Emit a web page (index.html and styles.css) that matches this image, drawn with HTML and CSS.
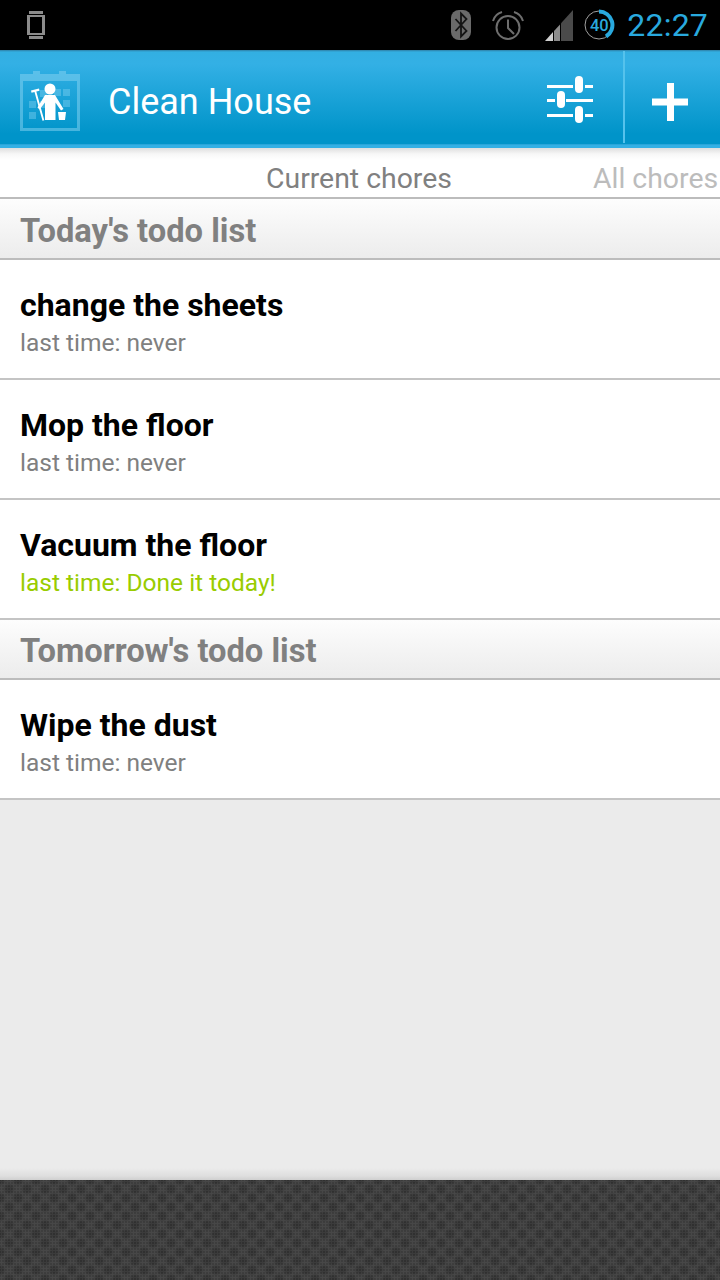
FILE: index.html
```
<!DOCTYPE html>
<html lang="en">
<head>
<meta charset="utf-8">
<title>Clean House</title>
<link rel="stylesheet" href="styles.css">
</head>
<body>
<div class="app">
  <div class="status">
    <svg class="st-phone" width="18" height="28" viewBox="0 0 18 28">
      <path fill="#8c8c8c" d="M2 0h14v3H2zM2 25h14v3H2z"/>
      <path fill="#8c8c8c" fill-rule="evenodd" d="M0 4h18v20H0zM3 6v16h12V6z"/>
    </svg>
    <div class="st-right">
      <svg class="st-bt" width="20" height="30" viewBox="0 0 20 30">
        <rect x="0" y="0" width="20" height="30" rx="8" fill="#6a6a6a"/>
        <path d="M4.500 9l11 12-5.500 5.500V3.500L15.500 9 4.500 21" fill="none" stroke="#141414" stroke-width="1.800"/>
      </svg>
      <svg class="st-alarm" width="32" height="30" viewBox="0 0 32 30">
        <circle cx="16" cy="16.500" r="11.500" fill="none" stroke="#6e6e6e" stroke-width="2"/>
        <path d="M16 8.500V17l6 6" fill="none" stroke="#6e6e6e" stroke-width="2"/>
        <path d="M1 10Q3 3 10 1M22 1Q29 3 31 10" fill="none" stroke="#6e6e6e" stroke-width="2"/>
      </svg>
      <svg class="st-signal" width="28" height="31" viewBox="0 0 28 31">
        <path fill="#4a4a4a" d="M28 0V31H16V13.300z"/>
        <path fill="#8c8c8c" d="M15 14.400V31H9V21z"/>
        <path fill="#d0d0d0" d="M8 22.100V31H0z"/>
      </svg>
      <div class="st-batt">
        <svg class="st-ring" width="32" height="32" viewBox="0 0 32 32">
          <circle cx="16" cy="16" r="14" fill="none" stroke="#a0a0a0" stroke-width="1"/>
          <path d="M16 2.500A13.500 13.500 0 0 1 23 27.500" fill="none" stroke="#29a9de" stroke-width="4"/>
        </svg>
        <span class="st-pct">40</span>
      </div>
      <span class="st-time">22:27</span>
    </div>
  </div>

  <header class="bar">
    <svg class="logo" width="60" height="60" viewBox="0 0 60 60">
      <g fill="#8ad4f2" fill-opacity=".5">
        <path fill-rule="evenodd" d="M0 3h13V0h7v3h19V0h7v3h14v57H0zM3 10v47h54V10z"/>
      </g>
      <g fill="#8ad4f2" fill-opacity=".4">
        <rect x="9" y="30" width="7" height="7"/><rect x="9" y="41" width="7" height="7"/>
        <rect x="20" y="19" width="7" height="7"/><rect x="20" y="30" width="7" height="7"/>
        <rect x="34" y="18" width="7" height="7"/><rect x="43" y="18" width="7" height="7"/>
        <rect x="43" y="29" width="7" height="7"/>
      </g>
      <g fill="#fff">
        <circle cx="30" cy="18" r="5.500"/>
        <path d="M25 24h10l8.500 14-2.500 1.500-5.500-8V49H25V31.500l-5.500 7-2-2z"/>
        <path d="M11 19.500l8-2 .5 2.200-3.200.8 8 28.700-1.800.5-8-28.700-3 .7z"/>
        <path d="M38 41h8l-1 8h-6z"/>
      </g>
    </svg>
    <h1 class="title">Clean House</h1>
    <button class="act act-tune" aria-label="Settings">
      <svg width="48" height="48" viewBox="0 0 48 48">
        <g fill="#fff">
          <rect x="1" y="9" width="26" height="3"/><rect x="39" y="9" width="8" height="3"/>
          <rect x="29" y="0" width="8" height="17" rx="4"/>
          <rect x="1" y="23" width="8" height="3"/><rect x="20" y="23" width="27" height="3"/>
          <rect x="11" y="15" width="8" height="17" rx="4"/>
          <rect x="1" y="38" width="26" height="3"/><rect x="39" y="38" width="8" height="3"/>
          <rect x="29" y="30" width="8" height="17" rx="4"/>
        </g>
      </svg>
    </button>
    <button class="act act-add" aria-label="Add">
      <svg width="36" height="38" viewBox="0 0 36 38">
        <path fill="#fff" d="M15 0h7v15.500h14v7H22V38h-7V22.500H0v-7h15z"/>
      </svg>
    </button>
  </header>
  <div class="bar-line"></div>

  <nav class="tabs">
    <span class="tab tab-on">Current chores</span>
    <span class="tab tab-off">All chores</span>
  </nav>

  <main class="list">
    <h2 class="sec sec-first">Today's todo list</h2>
    <div class="row"><div class="name">change the sheets</div><div class="last">last time: never</div></div>
    <div class="row"><div class="name">Mop the floor</div><div class="last">last time: never</div></div>
    <div class="row"><div class="name">Vacuum the floor</div><div class="last last-done">last time: Done it today!</div></div>
    <h2 class="sec">Tomorrow's todo list</h2>
    <div class="row"><div class="name">Wipe the dust</div><div class="last">last time: never</div></div>
  </main>

  <div class="footer"></div>
</div>
</body>
</html>
```
FILE: styles.css
```
* { box-sizing: border-box; }
html, body { margin: 0; padding: 0; }
body { font-family: Roboto, "Liberation Sans", sans-serif; background: #ebebeb; }
.app { width: 720px; height: 1280px; display: flex; flex-direction: column; overflow: hidden; }

.status { height: 50px; flex: none; background: #000; display: flex; align-items: center; justify-content: space-between; padding: 0 12px 0 27px; }
.st-phone { display: block; }
.st-right { display: flex; align-items: center; }
.st-bt { margin-right: 21px; margin-bottom: 1px; margin-left: 1px; }
.st-alarm { margin-right: 21px; margin-top: 2px; }
.st-signal { margin-right: 10px; }
.st-batt { position: relative; width: 32px; height: 32px; margin-right: 12px; }
.st-ring { display: block; }
.st-pct { position: absolute; inset: 0; display: flex; align-items: center; justify-content: center; font-size: 16.500px; color: #29a9de; font-weight: 500; }
.st-time { font-size: 32px; color: #29a9de; line-height: 50px; letter-spacing: .2px; }

.bar { height: 94px; flex: none; display: flex; align-items: center; padding-left: 20px; background: linear-gradient(#2f7fa5 0, #33afe2 2px, #33b0e5 14px, #0094c9 84px, #0094c9 100%); }
.logo { display: block; margin-top: 8px; flex: none; }
.title { margin: 0 0 0 28px; padding-top: 10px; flex: 1; font-size: 36px; font-weight: 400; color: #fff; line-height: 1; }
.act { border: 0; background: none; padding: 0; display: flex; align-items: center; justify-content: center; height: 92px; }
.act svg { display: block; }
.act-tune { width: 106px; padding-top: 6px; }
.act-add { width: 97px; border-left: 2px solid #55c2ec; padding: 10px 5px 0 0; }
.bar-line { height: 4px; flex: none; background: #33b0e5; border-top: 1px solid #29a5d9; }

.tabs { height: 51px; flex: none; background: linear-gradient(#dedede 0, #f7f7f7 6px, #fff 12px); border-bottom: 2px solid #bcbcbc; position: relative; }
.tab { position: absolute; font-size: 28.400px; line-height: 34px; top: 14px; white-space: nowrap; }
.tab-on { left: 266px; color: #808080; }
.tab-off { left: 593px; color: #bcbcbc; }

.list { flex: 1; display: flex; flex-direction: column; min-height: 0; background: linear-gradient(to bottom, #ebebeb calc(100% - 12px), #dedede calc(100% - 4px), #cfcfcf 100%); }
.sec { height: 60px; flex: none; margin: 0; padding: 0 20px; font-size: 32.700px; font-weight: 700; line-height: 62px; color: #808080; background: linear-gradient(#fdfdfd, #ececec); border-bottom: 2px solid #bcbcbc; }
.sec-first { height: 61px; line-height: 64px; }
.row { height: 120px; flex: none; background: #fff; border-bottom: 2px solid #c4c4c4; padding: 24px 20px 0; }
.name { font-size: 32px; font-weight: 700; color: #000; line-height: 42px; }
.last { font-size: 24.500px; color: #808080; line-height: 34px; }
.last-done { color: #99cc00; }

.footer { height: 100px; flex: none; background-color: #3d3d3d; background-image: radial-gradient(circle at 1.500px 1.500px, rgba(255,255,255,.05) 1px, transparent 1.300px), radial-gradient(circle, #303030 0, #303030 2.500px, transparent 6px), radial-gradient(circle, #303030 0, #303030 2.500px, transparent 6px); background-size: 3px 3px, 18px 18px, 18px 18px; background-position: 0 0, 0 0, 9px 9px; }
```
